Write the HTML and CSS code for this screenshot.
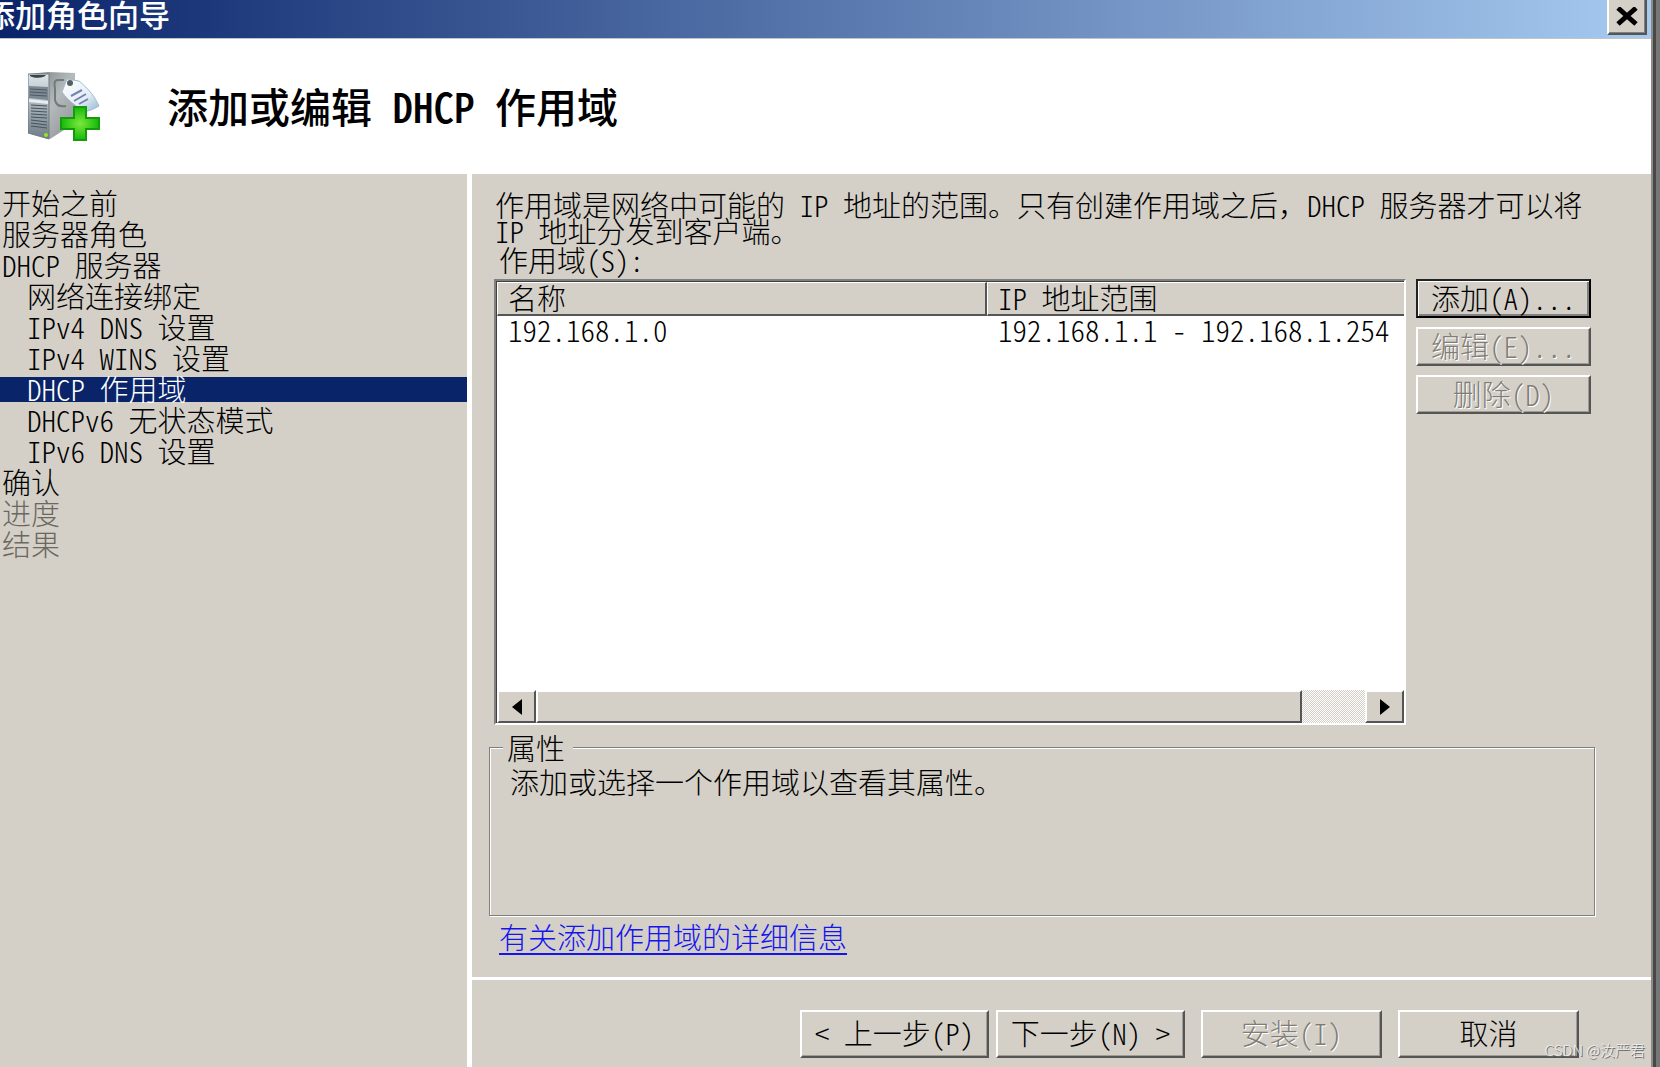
FILE: index.html
```
<!DOCTYPE html>
<html lang="zh-CN">
<head>
  <meta charset="UTF-8" />
  <meta name="viewport" content="width=device-width, initial-scale=1.0"/>
  <title>添加角色向导</title>
  <link rel="stylesheet" href="styles.css">
</head>
<body>
  <div class="window">
    <div class="titlebar">
      <div class="caption">添加角色向导</div>
      <button class="close" aria-label="关闭">
        <svg width="24" height="20" viewBox="0 0 24 20"><path d="M3 1 L21 17 M21 1 L3 17" stroke="#000" stroke-width="5" fill="none"/></svg>
      </button>
    </div>

    <header class="header">
      <svg class="logo" width="72" height="70" viewBox="0 0 72 70">
        <defs>
          <linearGradient id="side" x1="0" y1="0" x2="1" y2="1">
            <stop offset="0" stop-color="#747b7d"/><stop offset="0.5" stop-color="#b5babb"/><stop offset="1" stop-color="#8a9092"/>
          </linearGradient>
          <linearGradient id="front" x1="0" y1="0" x2="0" y2="1">
            <stop offset="0" stop-color="#dce6ea"/><stop offset="1" stop-color="#6f7b85"/>
          </linearGradient>
          <linearGradient id="tag" x1="0" y1="0" x2="1" y2="1">
            <stop offset="0" stop-color="#ffffff"/><stop offset="0.6" stop-color="#e4eef6"/><stop offset="1" stop-color="#8fb6d0"/>
          </linearGradient>
          <radialGradient id="plus">
            <stop offset="0" stop-color="#7be83c"/><stop offset="1" stop-color="#14b90a"/>
          </radialGradient>
        </defs>
        <path d="M0 2 L20 0 L47 1 L47 51 L22 67 L0 61 Z" fill="url(#side)"/>
        <path d="M0 2 H21 V67 L0 61 Z" fill="url(#front)" stroke="#727b80"/>
        <path d="M2 3 H18 C16 6 6 7 2 4 Z" fill="#39444b"/>
        <path d="M1 14 L20 15 V28 L1 26 Z" fill="#7c8994"/>
        <path d="M2 17 L19 18 M2 20 L19 21 M2 23 L19 24" stroke="#4d5963"/>
        <path d="M1 27 L20 29 V32 L1 30 Z" fill="#e6eeef"/>
        <path d="M3 33 L19 34 M3 36 L19 37 M3 39 L19 40 M3 42 L19 43 M3 45 L19 46 M3 48 L19 50 M3 51 L19 53 M3 54 L19 56" stroke="#46525d"/>
        <circle cx="18" cy="63" r="2" fill="#98e51f"/>
        <path d="M36 8 H30 C26 8 26 12 27 16 V28 C28 33 32 35 38 34" fill="none" stroke="#727a7c" stroke-width="2"/>
        <path d="M39 7 L51 9 C61 17 67 25 71 34 C66 37 61 39 56 40 C50 35 40 29 34 20 Z" fill="url(#tag)" stroke="#a5bccb"/>
        <circle cx="42" cy="11" r="3" fill="#555e65"/>
        <path d="M43 24 L54 18 M46 29 L58 22 M51 32 L60 27" stroke="#7482b5" stroke-width="2"/>
        <path d="M46 35 H58 V46 H71 V57 H58 V68 H46 V57 H33 V46 H46 Z" fill="url(#plus)" stroke="#159b0e" stroke-width="2"/>
      </svg>
      <h1>添加或编辑 DHCP 作用域</h1>
    </header>

    <div class="body">
      <ul class="steps">
        <li>开始之前</li>
        <li>服务器角色</li>
        <li>DHCP 服务器</li>
        <li class="sub">网络连接绑定</li>
        <li class="sub">IPv4 DNS 设置</li>
        <li class="sub">IPv4 WINS 设置</li>
        <li class="sub current">DHCP 作用域</li>
        <li class="sub">DHCPv6 无状态模式</li>
        <li class="sub">IPv6 DNS 设置</li>
        <li>确认</li>
        <li class="pending">进度</li>
        <li class="pending">结果</li>
      </ul>

      <div class="right">
        <main class="content">
          <p class="intro">作用域是网络中可能的 IP 地址的范围。只有创建作用域之后<span class="full">，</span>DHCP 服务器才可以将 IP 地址分发到客户端。</p>
          <p class="label" id="scopeLabel">作用域(S):</p>

          <div class="scopes">
            <div class="list">
              <table aria-labelledby="scopeLabel">
                <thead>
                  <tr><th class="name">名称</th><th>IP 地址范围</th></tr>
                </thead>
                <tbody>
                  <tr><td>192.168.1.0</td><td>192.168.1.1 - 192.168.1.254</td></tr>
                </tbody>
              </table>
              <div class="scrollbar">
                <button class="arrow" aria-label="向左"><svg width="10" height="16" viewBox="0 0 10 16"><path d="M10 0 V16 L0 8 Z"/></svg></button>
                <div class="thumb"></div>
                <div class="track"></div>
                <button class="arrow" aria-label="向右"><svg width="10" height="16" viewBox="0 0 10 16"><path d="M0 0 V16 L10 8 Z"/></svg></button>
              </div>
            </div>
            <div class="actions">
              <button class="btn default">添加(A)...</button>
              <button class="btn" disabled>编辑(E)...</button>
              <button class="btn" disabled>删除(D)</button>
            </div>
          </div>

          <fieldset class="props">
            <legend>属性</legend>
            <p>添加或选择一个作用域以查看其属性。</p>
          </fieldset>

          <a class="more" href="#">有关添加作用域的详细信息</a>
        </main>

        <footer class="footer">
          <button class="btn nav">&lt; 上一步(P)</button>
          <button class="btn nav">下一步(N) &gt;</button>
          <button class="btn final" disabled>安装(I)</button>
          <button class="btn final">取消</button>
        </footer>
      </div>
    </div>
    <div class="watermark">CSDN @汝严君</div>
  </div>
</body>
</html>
```
FILE: styles.css
```
* {
  box-sizing: border-box;
}
body {
  margin: 0;
  background: #d4d0c8;
  color: #000;
  font-family: "Noto Sans CJK SC", sans-serif;
  font-size: 29px;
  font-weight: 300;
  line-height: 26px;
  /* half-width latin, two letters per hanzi */
  font-feature-settings: "hwid";
}
p, h1, ul {
  margin: 0;
  padding: 0;
}
button {
  font: inherit;
  font-feature-settings: inherit;
  color: inherit;
  padding: 0;
  background: #d4d0c8;
}
.window {
  position: relative;
  display: flex;
  flex-direction: column;
  min-height: 100vh;
  padding-right: 5px;
  border-right: 4px solid #777;
  box-shadow: inset -3px 0 #484848, inset -5px 0 #8c8b86;
}

/* title bar */
.titlebar {
  display: flex;
  justify-content: space-between;
  height: 39px;
  padding-right: 4px;
  background: linear-gradient(to right, #0a246a, #a6caf0);
  border-bottom: 1px solid #c4c4c4;
  color: #fff;
  overflow: hidden;
}
.caption {
  font-size: 31px;
  font-weight: 500;
  line-height: 28px;
  text-indent: -16px;
}
.close {
  width: 40px;
  height: 35px;
  border: 2px solid;
  border-color: #d4d0c8 #555 #555 #fff;
  border-top: 0;
  box-shadow: inset -1px -1px #808080;
}
.close svg {
  display: block;
  margin: 0 auto;
}

/* header */
.header {
  display: flex;
  align-items: center;
  gap: 67px;
  height: 135px;
  padding-left: 28px;
  background: #fff;
}
h1 {
  padding-bottom: 4px;
  font-size: 41px;
  font-weight: 500;
  line-height: 48px;
}

.body {
  display: flex;
  flex: 1;
}

/* steps */
.steps {
  display: flex;
  flex-direction: column;
  gap: 6px;
  width: 472px;
  padding-top: 17px;
  border-right: 5px solid #fff;
  list-style: none;
}
.steps li {
  height: 25px;
  line-height: 23px;
  padding-left: 2px;
}
.steps .sub {
  padding-left: 27px;
}
.steps .current {
  background: #0a246a;
  color: #fff;
}
.steps .pending {
  color: #6b6862;
}

/* right side */
.right {
  display: flex;
  flex: 1;
  flex-direction: column;
}
.content {
  display: flex;
  flex: 1;
  flex-direction: column;
  padding: 17px 56px 28px 17px;
}
.intro {
  padding-left: 6px;
}
.full {
  font-feature-settings: normal;
}
.label {
  padding: 3px 0 7px 10px;
}
.scopes {
  display: flex;
  flex: 1;
  gap: 10px;
  padding: 0 4px 9px 5px;
}
.list {
  display: flex;
  flex: 1;
  flex-direction: column;
  justify-content: space-between;
  border: 2px solid;
  border-color: #808080 #fff #fff #808080;
  box-shadow: inset 1px 1px #404040;
  padding: 1px 0 0 1px;
  background: #fff;
}
table {
  width: 100%;
  border-collapse: separate;
  border-spacing: 0;
  table-layout: fixed;
}
th {
  height: 34px;
  padding: 0 10px 4px;
  background: #d4d0c8;
  border-top: 1px solid #fff;
  border-left: 1px solid #fff;
  border-bottom: 2px solid #555;
  font-weight: 300;
  text-align: left;
}
.name {
  width: 490px;
  border-right: 2px solid #555;
}
td {
  height: 30px;
  padding: 0 0 4px 11px;
  white-space: nowrap;
}
.scrollbar {
  display: flex;
  height: 33px;
  background: repeating-conic-gradient(#fff 0 25%, #d4d0c8 0 50%) 0 0 / 2px 2px;
}
.arrow, .thumb {
  background: #d4d0c8;
  border: 2px solid;
  border-color: #fff #555 #555 #fff;
}
.arrow {
  display: flex;
  align-items: center;
  justify-content: center;
  width: 39px;
}
.thumb {
  flex: 12;
}
.track {
  flex: 1;
}

/* buttons */
.btn {
  padding-bottom: 4px;
  border: 2px solid;
  border-color: #fff #555 #555 #fff;
  box-shadow: inset -1px -1px #a09d97;
}
.btn:disabled {
  color: #807d77;
  text-shadow: 1px 1px #fff;
}
.default {
  border-color: #222 #000 #000 #222;
  box-shadow: inset 1px 1px #fff, inset -2px -2px #808080;
}
.actions {
  display: flex;
  flex-direction: column;
  gap: 9px;
  width: 175px;
}
.actions .btn {
  height: 39px;
}

/* properties */
.props {
  min-height: 182px;
  margin: 0;
  padding: 8px 20px;
  border: 1px solid #808080;
  box-shadow: inset 1px 1px #fff, 1px 1px #fff;
}
.props legend {
  margin-left: -7px;
  padding: 0 8px 0 4px;
  background: #d4d0c8;
}
.more {
  align-self: flex-start;
  margin: 7px 0 0 10px;
  color: #1414ee;
  text-decoration: underline;
  text-underline-offset: 4px;
  text-decoration-thickness: 2px;
}

/* footer */
.footer {
  display: flex;
  justify-content: flex-end;
  gap: 7px;
  padding: 30px 72px 9px 0;
  border-top: 3px solid #fff;
}
.footer .btn {
  height: 48px;
}
.nav {
  width: 189px;
}
.final {
  width: 181px;
  margin-left: 9px;
}
.watermark {
  position: absolute;
  right: 11px;
  bottom: 7px;
  color: #eee;
  font-size: 15px;
  line-height: 20px;
  font-feature-settings: normal;
  text-shadow: 1px 1px #666;
}
```
